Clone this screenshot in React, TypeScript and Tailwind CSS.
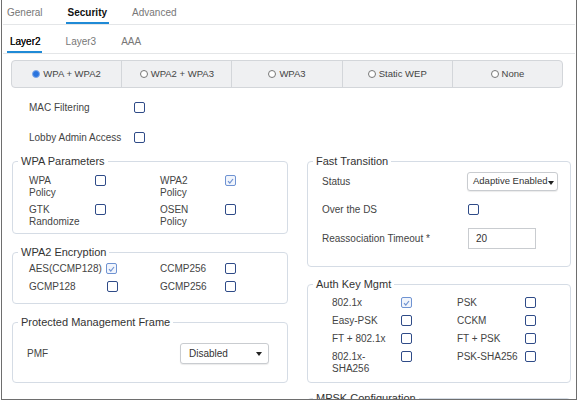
import React from 'react';

function Checkbox({ checked = false }: { checked?: boolean }) {
  return (
    <span
      className={`flex items-center justify-center w-[11px] h-[11px] shrink-0 rounded-[2px] border-[1.5px] ${
        checked ? 'border-[#6f93d2] bg-[#f1f5fc]' : 'border-[#2f4b88] bg-white'
      }`}
    >
      {checked && (
        <svg width="7" height="6" viewBox="0 0 7 6">
          <path d="M1 3.2 L2.8 5 L6 1" fill="none" stroke="#6f93d2" strokeWidth="1.2" />
        </svg>
      )}
    </span>
  );
}

function Caret() {
  return (
    <svg width="6" height="4" viewBox="0 0 6 4" className="shrink-0">
      <polygon points="0,0 6,0 3,4" fill="#222" />
    </svg>
  );
}

function Group({ title, className, children }: { title: string; className: string; children?: React.ReactNode }) {
  return (
    <fieldset className={`border border-[#d5dce5] rounded-[4px] ${className}`}>
      <legend className="ml-[5px] px-[3px] text-[11px] leading-[13px] text-[#333]">{title}</legend>
      {children}
    </fieldset>
  );
}

// label + checkbox pair used inside the grouped boxes
function Pair({ label, checked, labelW }: { label: React.ReactNode; checked?: boolean; labelW: string }) {
  return (
    <div className="flex items-start">
      <div className={`${labelW} pt-[3px] leading-[12px]`}>{label}</div>
      <div className="pt-[3px]">
        <Checkbox checked={checked} />
      </div>
    </div>
  );
}

const modes = ['WPA + WPA2', 'WPA2 + WPA3', 'WPA3', 'Static WEP', 'None'];

export default function App() {
  return (
    <div className="ml-[1px] w-[576px] h-[400px] overflow-hidden bg-white border-l border-r border-b border-[#6e6e6e] font-['Liberation_Sans',Arial,sans-serif] text-[10px] text-[#444]">
      {/* Top tabs */}
      <div className="mx-[1px] flex h-[25px] border-b border-[#e4e6e8] pl-[2px] gap-[21px]">
        <div className="h-[24px] flex items-center pt-[2px] px-[2px] border-b-2 border-transparent text-[#777]">General</div>
        <div className="h-[24px] flex items-center pt-[2px] px-[2px] border-b-2 border-[#1f8ad6] font-bold text-[#111]">Security</div>
        <div className="h-[24px] flex items-center pt-[2px] px-[2px] border-b-2 border-transparent text-[#777]">Advanced</div>
      </div>

      {/* Sub tabs */}
      <div className="mx-[1px] flex h-[29px] border-b border-[#e4e6e8] pl-[4px] gap-[23px]">
        <div className="h-[28px] flex items-center pt-[6px] pl-[3px] pr-[1px] border-b-2 border-[#1f8ad6] text-[#111] [text-shadow:0_0_0.3px_#111]">Layer2</div>
        <div className="h-[28px] flex items-center pt-[6px] px-[1px] border-b-2 border-transparent text-[#777]">Layer3</div>
        <div className="h-[28px] flex items-center pt-[6px] px-[1px] border-b-2 border-transparent text-[#777]">AAA</div>
      </div>

      {/* Security mode */}
      <div className="ml-[9px] mt-[6px] w-[552px] h-[28px] flex rounded-[4px] border border-[#d3d6da] bg-[#eff0f2] text-[9.5px] text-[#444]">
        {modes.map((m, i) => (
          <div
            key={m}
            className={`flex-1 flex items-center justify-center gap-[3px] ${i < modes.length - 1 ? 'border-r border-[#d3d6da]' : ''}`}
          >
            {i === 0 ? (
              <span className="w-[8px] h-[8px] rounded-full bg-[#2a74de] border border-[#7fa8ea]" />
            ) : (
              <span className="w-[8px] h-[8px] rounded-full bg-white border border-[#777]" />
            )}
            <span>{m}</span>
          </div>
        ))}
      </div>

      {/* MAC / Lobby */}
      <div className="mt-[4px] pl-[27px]">
        <div className="flex items-center h-[30px]">
          <div className="w-[105px]">MAC Filtering</div>
          <Checkbox />
        </div>
        <div className="flex items-center h-[30px]">
          <div className="w-[105px]">Lobby Admin Access</div>
          <Checkbox />
        </div>
      </div>

      <div className="mt-[3px] flex">
        {/* Left column */}
        <div className="ml-[10px] w-[276px] flex flex-col">
          <Group title="WPA Parameters" className="h-[79px]">
            <div className="pt-[4px] pl-[16px] grid grid-cols-[131px_1fr] gap-y-[2px]">
              <Pair labelW="w-[66px]" label={<>WPA<br />Policy</>} />
              <Pair labelW="w-[65px]" label={<>WPA2<br />Policy</>} checked />
              <Pair labelW="w-[66px]" label={<>GTK<br />Randomize</>} />
              <Pair labelW="w-[65px]" label={<>OSEN<br />Policy</>} />
            </div>
          </Group>

          <Group title="WPA2 Encryption" className="mt-[12px] h-[58px]">
            <div className="pt-[1px] pl-[16px] grid grid-cols-[131px_1fr] gap-y-[3px]">
              <Pair labelW="w-[77px]" label="AES(CCMP128)" checked />
              <Pair labelW="w-[65px]" label="CCMP256" />
              <Pair labelW="w-[78px]" label="GCMP128" />
              <Pair labelW="w-[65px]" label="GCMP256" />
            </div>
          </Group>

          <Group title="Protected Management Frame" className="mt-[12px] h-[67px]">
            <div className="pt-[14px] pl-[14px] flex items-center h-[35px]">
              <div className="w-[153px]">PMF</div>
              <div className="w-[89px] h-[21px] flex items-center justify-between pl-[8px] pr-[6px] rounded-[3px] border border-[#c9ccd0] bg-white shadow-[0_1px_1px_rgba(0,0,0,0.08)] text-[#333]">
                <span>Disabled</span>
                <Caret />
              </div>
            </div>
          </Group>
        </div>

        {/* Right column */}
        <div className="ml-[19px] w-[264px] flex flex-col">
          <Group title="Fast Transition" className="h-[112px]">
            <div className="pt-[4px] pl-[14px]">
              <div className="flex items-center h-[19px]">
                <div className="w-[145px]">Status</div>
                <div className="w-[91px] h-[19px] flex items-center pl-[5px] gap-[1px] rounded-[3px] border border-[#c9ccd0] bg-white shadow-[0_1px_1px_rgba(0,0,0,0.08)] text-[9.5px] text-[#333]">
                  <span>Adaptive Enabled</span>
                  <span className="mt-[3px]"><Caret /></span>
                </div>
              </div>
              <div className="flex items-center h-[19px] mt-[9px]">
                <div className="w-[146px]">Over the DS</div>
                <Checkbox />
              </div>
              <div className="flex items-center h-[21px] mt-[9px]">
                <div className="w-[146px]">Reassociation Timeout *</div>
                <div className="w-[68px] h-[21px] flex items-center pl-[7px] border border-[#c9ccd0] bg-white text-[#333]">20</div>
              </div>
            </div>
          </Group>

          <Group title="Auth Key Mgmt" className="mt-[11px] h-[105px]">
            <div className="pt-[3px] pl-[24px] grid grid-cols-[125px_1fr] gap-y-[3px]">
              <Pair labelW="w-[69px]" label="802.1x" checked />
              <Pair labelW="w-[68px]" label="PSK" />
              <Pair labelW="w-[69px]" label="Easy-PSK" />
              <Pair labelW="w-[68px]" label="CCKM" />
              <Pair labelW="w-[69px]" label="FT + 802.1x" />
              <Pair labelW="w-[68px]" label="FT + PSK" />
              <Pair labelW="w-[69px]" label={<>802.1x-<br />SHA256</>} />
              <Pair labelW="w-[68px]" label="PSK-SHA256" />
            </div>
          </Group>

          <Group title="MPSK Configuration" className="mt-[9px] h-[40px]" />
        </div>
      </div>
    </div>
  );
}
